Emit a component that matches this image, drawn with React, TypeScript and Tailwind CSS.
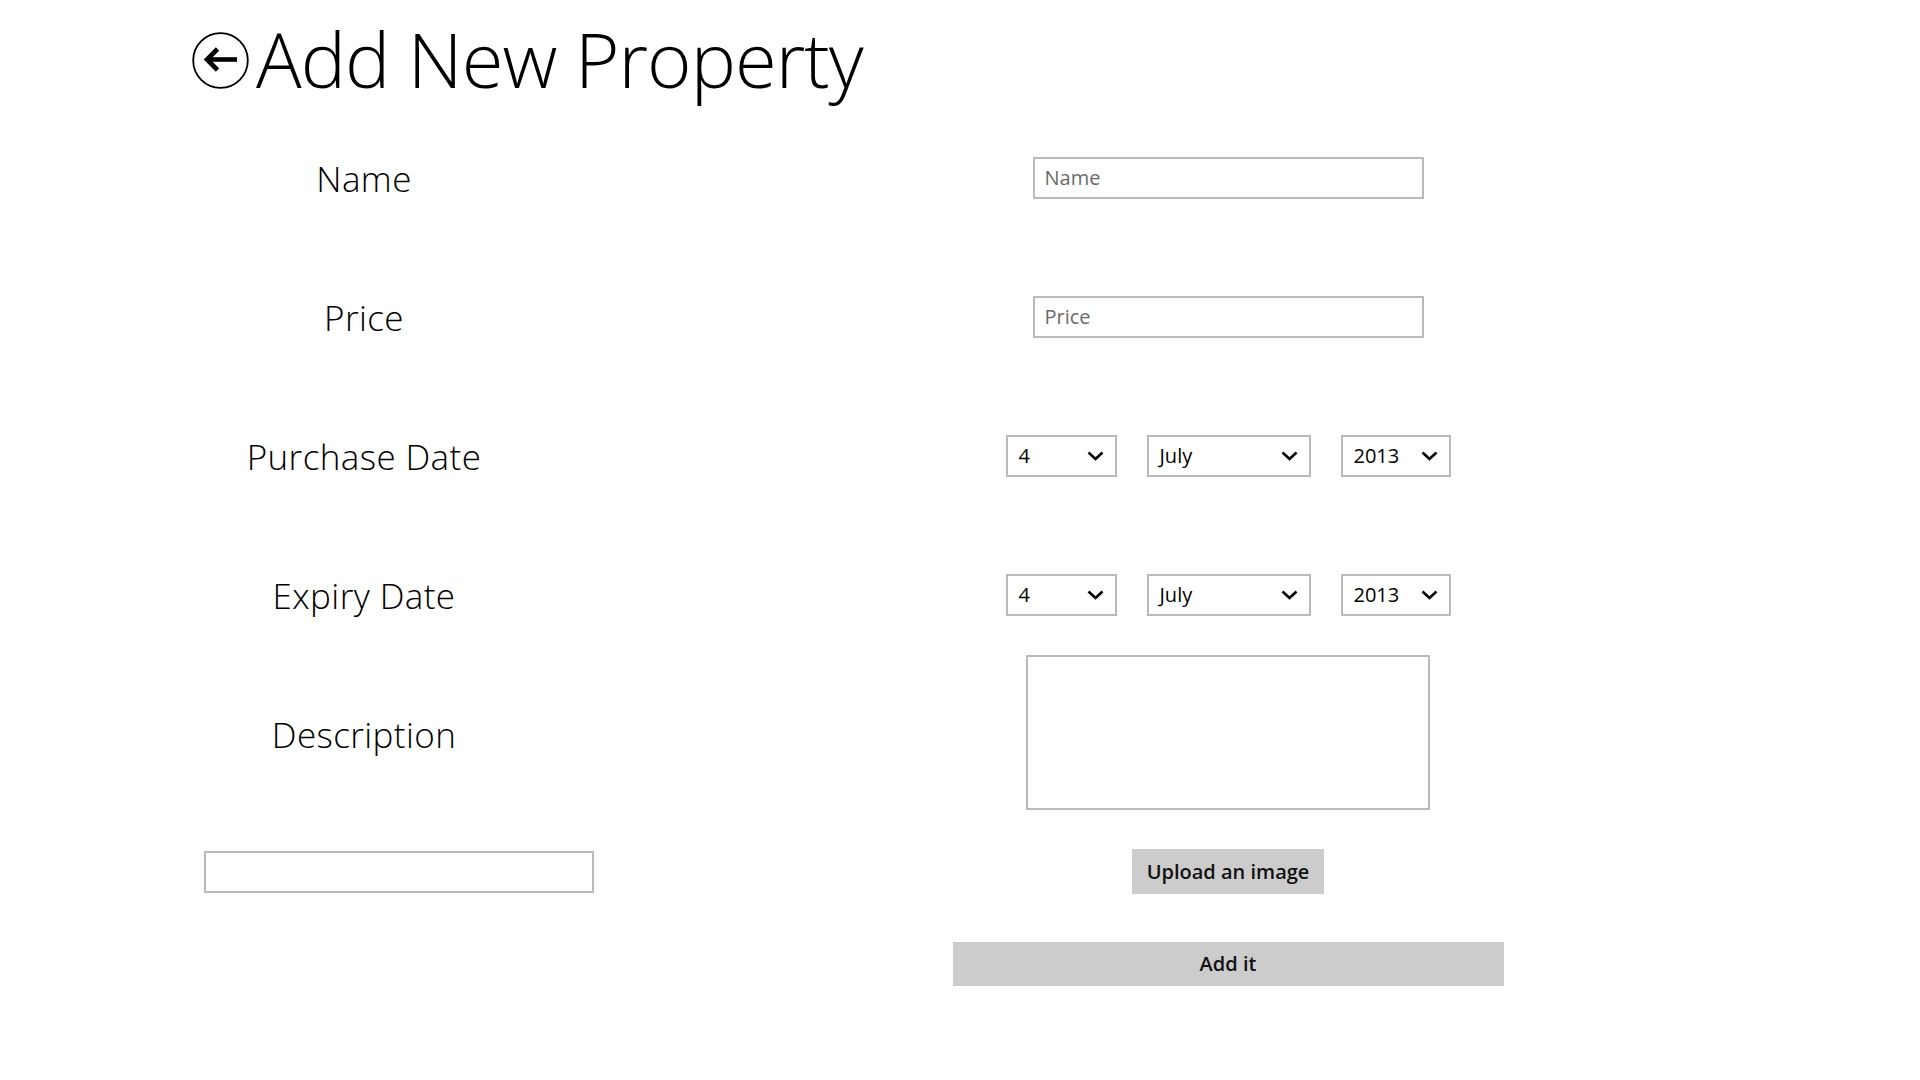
import React from "react";

const labelFont = { fontFamily: '"Open Sans", "Noto Sans", sans-serif' };

function BackIcon() {
  return (
    <svg width="57" height="57" viewBox="0 0 57 57" aria-hidden="true">
      <circle cx="28.5" cy="28.5" r="27.3" fill="none" stroke="#000" strokeWidth="1.8" />
      <path d="M15 27.5 H45" stroke="#000" strokeWidth="4.6" />
      <path d="M25.5 17 L15 27.5 L25.5 38" fill="none" stroke="#000" strokeWidth="4.6" />
    </svg>
  );
}

function Chevron() {
  return (
    <svg width="17" height="10" viewBox="0 0 17 10" aria-hidden="true">
      <path d="M1.5 1.5 L8.5 8 L15.5 1.5" fill="none" stroke="#000" strokeWidth="2.6" />
    </svg>
  );
}

function Select({ value, width }: { value: string; width: string }) {
  return (
    <div className={`flex h-[42px] ${width} items-center justify-between border-2 border-[#bababa] bg-white pl-[11px] pr-[11px] text-[20px] text-black`}>
      <span>{value}</span>
      <Chevron />
    </div>
  );
}

function DateRow() {
  return (
    <div className="flex items-center gap-[30px]">
      <Select value="4" width="w-[111px]" />
      <Select value="July" width="w-[164px]" />
      <Select value="2013" width="w-[110px]" />
    </div>
  );
}

function TextBox({ placeholder }: { placeholder?: string }) {
  return (
    <div className="flex h-[42px] w-[391px] items-center border-2 border-[#bababa] bg-white px-[10px] text-[20px] text-[#6b6b6b]">
      {placeholder}
    </div>
  );
}

function FormRow({ label, children }: { label: string; children: React.ReactNode }) {
  return (
    <div className="flex h-[139px] items-center">
      <div className="flex w-[728px] justify-center pt-[4px]">
        <span className="text-[35px] font-light tracking-[0.4px] text-black" style={labelFont}>
          {label}
        </span>
      </div>
      <div className="flex w-[1000px] justify-center">{children}</div>
    </div>
  );
}

export default function App() {
  return (
    <div className="min-h-screen w-full bg-white text-black" style={labelFont}>
      <header className="flex h-[108px] items-start pl-[192px] pt-[32px]">
        <BackIcon />
        <h1 className="ml-[7px] mt-[-11px] text-[76px] font-light leading-none tracking-[-1px]">Add New Property</h1>
      </header>

      <div className="flex flex-col">
        <FormRow label="Name">
          <TextBox placeholder="Name" />
        </FormRow>
        <FormRow label="Price">
          <TextBox placeholder="Price" />
        </FormRow>
        <FormRow label="Purchase Date">
          <DateRow />
        </FormRow>
        <FormRow label="Expiry Date">
          <DateRow />
        </FormRow>
        <FormRow label="Description">
          <div className="mt-[-3px] h-[155px] w-[404px] border-2 border-[#bababa] bg-white" />
        </FormRow>
      </div>

      <div className="mt-[46px] flex h-[45px] items-center">
        <div className="w-[728px] pl-[204px]">
          <div className="h-[42px] w-[390px] border-2 border-[#bababa] bg-white" />
        </div>
        <div className="flex w-[1000px] justify-center">
          <button className="h-[45px] w-[192px] bg-[#cccccc] text-[20px] font-semibold text-[#111]">Upload an image</button>
        </div>
      </div>

      <div className="mt-[48px] flex">
        <div className="w-[728px]" />
        <div className="flex w-[1000px] justify-center">
          <button className="h-[44px] w-[551px] bg-[#cccccc] text-[20px] font-semibold text-[#111]">Add it</button>
        </div>
      </div>
    </div>
  );
}
